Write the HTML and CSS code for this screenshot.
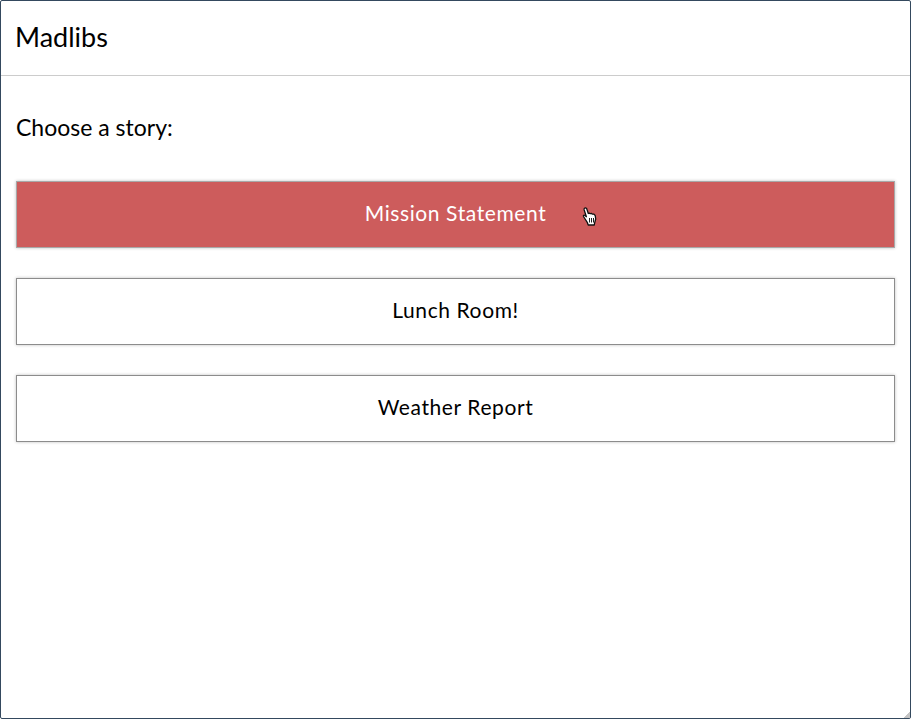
FILE: index.html
```html
<!DOCTYPE html>
<html lang="en">
<head>
<meta charset="utf-8">
<title>Madlibs</title>
<link rel="stylesheet" href="styles.css">
</head>
<body>
<div class="window">
  <header class="topbar"><h1 class="title">Madlibs</h1></header>
  <main class="content">
    <p class="prompt">Choose a story:</p>
    <div class="stories">
      <button class="story story-active" type="button">Mission Statement
        <svg class="cursor" width="16" height="20" viewBox="0 0 16 20" aria-hidden="true">
          <path d="M2.500 1.200c1-.6 2.100 0 2.400 1l1.400 4.300 1-.4 1 .6 1.200-.3 1 .8 1.200-.1 1.500 1.400.5 3.500-1 3.700-.4 2.300H6.200l-.8-2.300L1.500 9.500c-.5-1 .6-1.700 1.500-1l1.400 1.200L2.200 3c-.2-.7-.2-1.400.3-1.800z" fill="#fff" stroke="#111" stroke-width="1.300" stroke-linejoin="round"/>
          <path d="M7.500 11v4.500M9.500 11v4.500M11.500 11v4.500" stroke="#222" stroke-width="1" fill="none"/>
        </svg>
      </button>
      <button class="story" type="button">Lunch Room!</button>
      <button class="story" type="button">Weather Report</button>
    </div>
  </main>
  <span class="grip"></span>
</div>
</body>
</html>
```

FILE: styles.css
```css
* { box-sizing: border-box; }
html, body { margin: 0; height: 100%; }
body { background: #fff; color: #000; font-family: "Lato", "Open Sans", sans-serif; }
.window {
  position: relative;
  height: 719px;
  border: 1px solid #34495e;
  border-radius: 2px;
  overflow: hidden;
}
.topbar {
  height: 75px;
  border-bottom: 1px solid #ccc;
  display: flex;
  align-items: center;
  padding: 0 15px;
}
.title { margin: 0; font-size: 27px; font-weight: 400; line-height: 32px; position: relative; top: -1px; left: -1px; }
.content { padding: 0 15px; }
.prompt { margin: 0; padding-top: 35px; height: 105px; font-size: 23px; line-height: 32px; }
.stories { display: flex; flex-direction: column; gap: 30px; }
.story {
  position: relative;
  width: 879px;
  height: 67px;
  padding: 0 0 5px;
  background: #fff;
  border: 1px solid #8c8c8c;
  box-shadow: 0 0 3px rgba(0, 0, 0, .25);
  color: #000;
  font-family: inherit;
  font-size: 21px;
  letter-spacing: .6px;
}
.story-active {
  background: #cd5c5c;
  border-color: #a8a8a8;
  color: #fff;
}
.cursor { position: absolute; left: 565px; top: 25px; }
.grip {
  position: absolute;
  right: 0;
  bottom: 0;
  width: 6px;
  height: 6px;
  background: linear-gradient(135deg, transparent 50%, #c4c4c4 50%);
}
```
